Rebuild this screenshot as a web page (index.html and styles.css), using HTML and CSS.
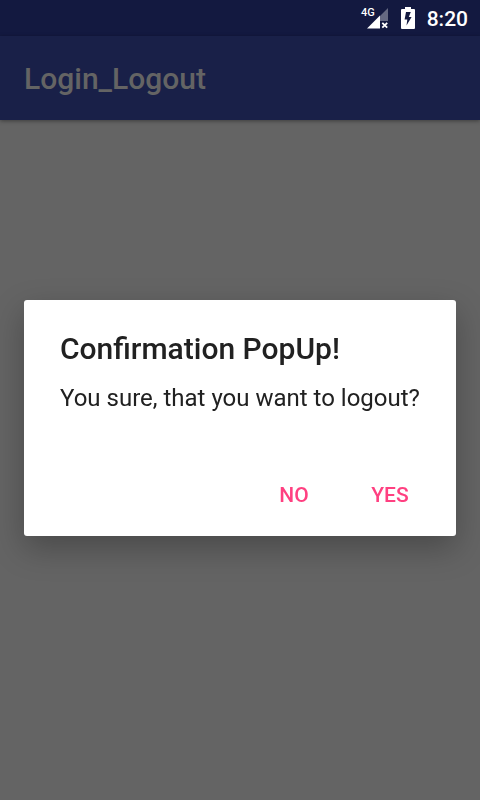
FILE: index.html
```html
<!DOCTYPE html>
<html lang="en">
<head>
<meta charset="utf-8">
<meta name="viewport" content="width=device-width, initial-scale=1">
<title>Login_Logout</title>
<link rel="stylesheet" href="styles.css">
</head>
<body>
<div class="status-bar">
  <div class="signal">
    <span class="signal-type">4G</span>
    <svg class="signal-icon" width="22" height="22" viewBox="0 0 22 22" aria-hidden="true">
      <path d="M21 1V14H13V9Z" fill="#fff" fill-opacity=".35"/>
      <path d="M0 21.5L13 8.5V21.5Z" fill="#fff"/>
      <path d="M15.3 15.8L20.2 20.7M20.2 15.8L15.3 20.7" stroke="#fff" stroke-width="1.8"/>
    </svg>
  </div>
  <svg class="battery" width="14" height="22" viewBox="0 0 14 22" aria-hidden="true">
    <path fill="#fff" fill-rule="evenodd" d="M4 0H10V2H13Q14 2 14 3V21Q14 22 13 22H1Q0 22 0 21V3Q0 2 1 2H4ZM5 5L3.6 12.5H6.3L5.5 18.5L10.6 10H7.8L9.8 5Z"/>
  </svg>
  <time class="clock">8:20</time>
</div>
<header class="app-bar">
  <h1 class="app-title">Login_Logout</h1>
</header>
<main class="content">
  <section class="dialog" role="alertdialog" aria-modal="true" aria-labelledby="dialog-title" aria-describedby="dialog-message">
    <h2 class="dialog-title" id="dialog-title">Confirmation PopUp!</h2>
    <p class="dialog-message" id="dialog-message">You sure, that you want to logout?</p>
    <div class="dialog-actions">
      <button class="dialog-button" type="button">NO</button>
      <button class="dialog-button" type="button">YES</button>
    </div>
  </section>
</main>
</body>
</html>
```

FILE: styles.css
```css
* {
  box-sizing: border-box;
}

body {
  margin: 0;
  min-height: 100vh;
  display: flex;
  flex-direction: column;
  background: #646464;
  font-family: Roboto, sans-serif;
}

.status-bar {
  height: 36px;
  padding: 0 12px;
  display: flex;
  align-items: center;
  justify-content: flex-end;
  gap: 12px;
  background: #131940;
  color: #fff;
}

.signal {
  position: relative;
  display: flex;
}

.signal-type {
  position: absolute;
  right: 14px;
  top: 0;
  font-size: 11px;
  line-height: 12px;
  font-weight: 500;
}

.clock {
  padding-top: 2px;
  font-size: 21px;
  line-height: 24px;
  font-weight: 500;
}

.app-bar {
  height: 84px;
  padding: 2px 24px 0;
  display: flex;
  align-items: center;
  background: #192048;
  box-shadow: 0 1px 4px rgba(0, 0, 0, 0.4);
}

.app-title {
  margin: 0;
  font-size: 30px;
  line-height: 36px;
  font-weight: 500;
  color: #646464;
}

/* The dialog is centred in the whole area below the status bar. */
.content {
  position: fixed;
  inset: 36px 0 0;
  padding: 24px;
  display: flex;
  align-items: center;
  justify-content: center;
}

.dialog {
  width: 100%;
  padding-top: 31px;
  border-radius: 3px;
  background: #fff;
  color: #212121;
  box-shadow: 0 12px 32px rgba(0, 0, 0, 0.27);
}

.dialog-title,
.dialog-message {
  margin: 0;
  padding: 0 36px;
}

.dialog-title {
  font-size: 30px;
  line-height: 36px;
  font-weight: 500;
}

.dialog-message {
  padding-top: 16px;
  padding-right: 24px;
  font-size: 24px;
  line-height: 30px;
}

.dialog-actions {
  margin-top: 40px;
  padding: 6px 18px 5px;
  display: flex;
  justify-content: flex-end;
}

.dialog-button {
  min-width: 96px;
  height: 72px;
  padding: 0 12px;
  border: 0;
  background: none;
  color: #ff4081;
  font: 500 21px/24px Roboto, sans-serif;
}
```
